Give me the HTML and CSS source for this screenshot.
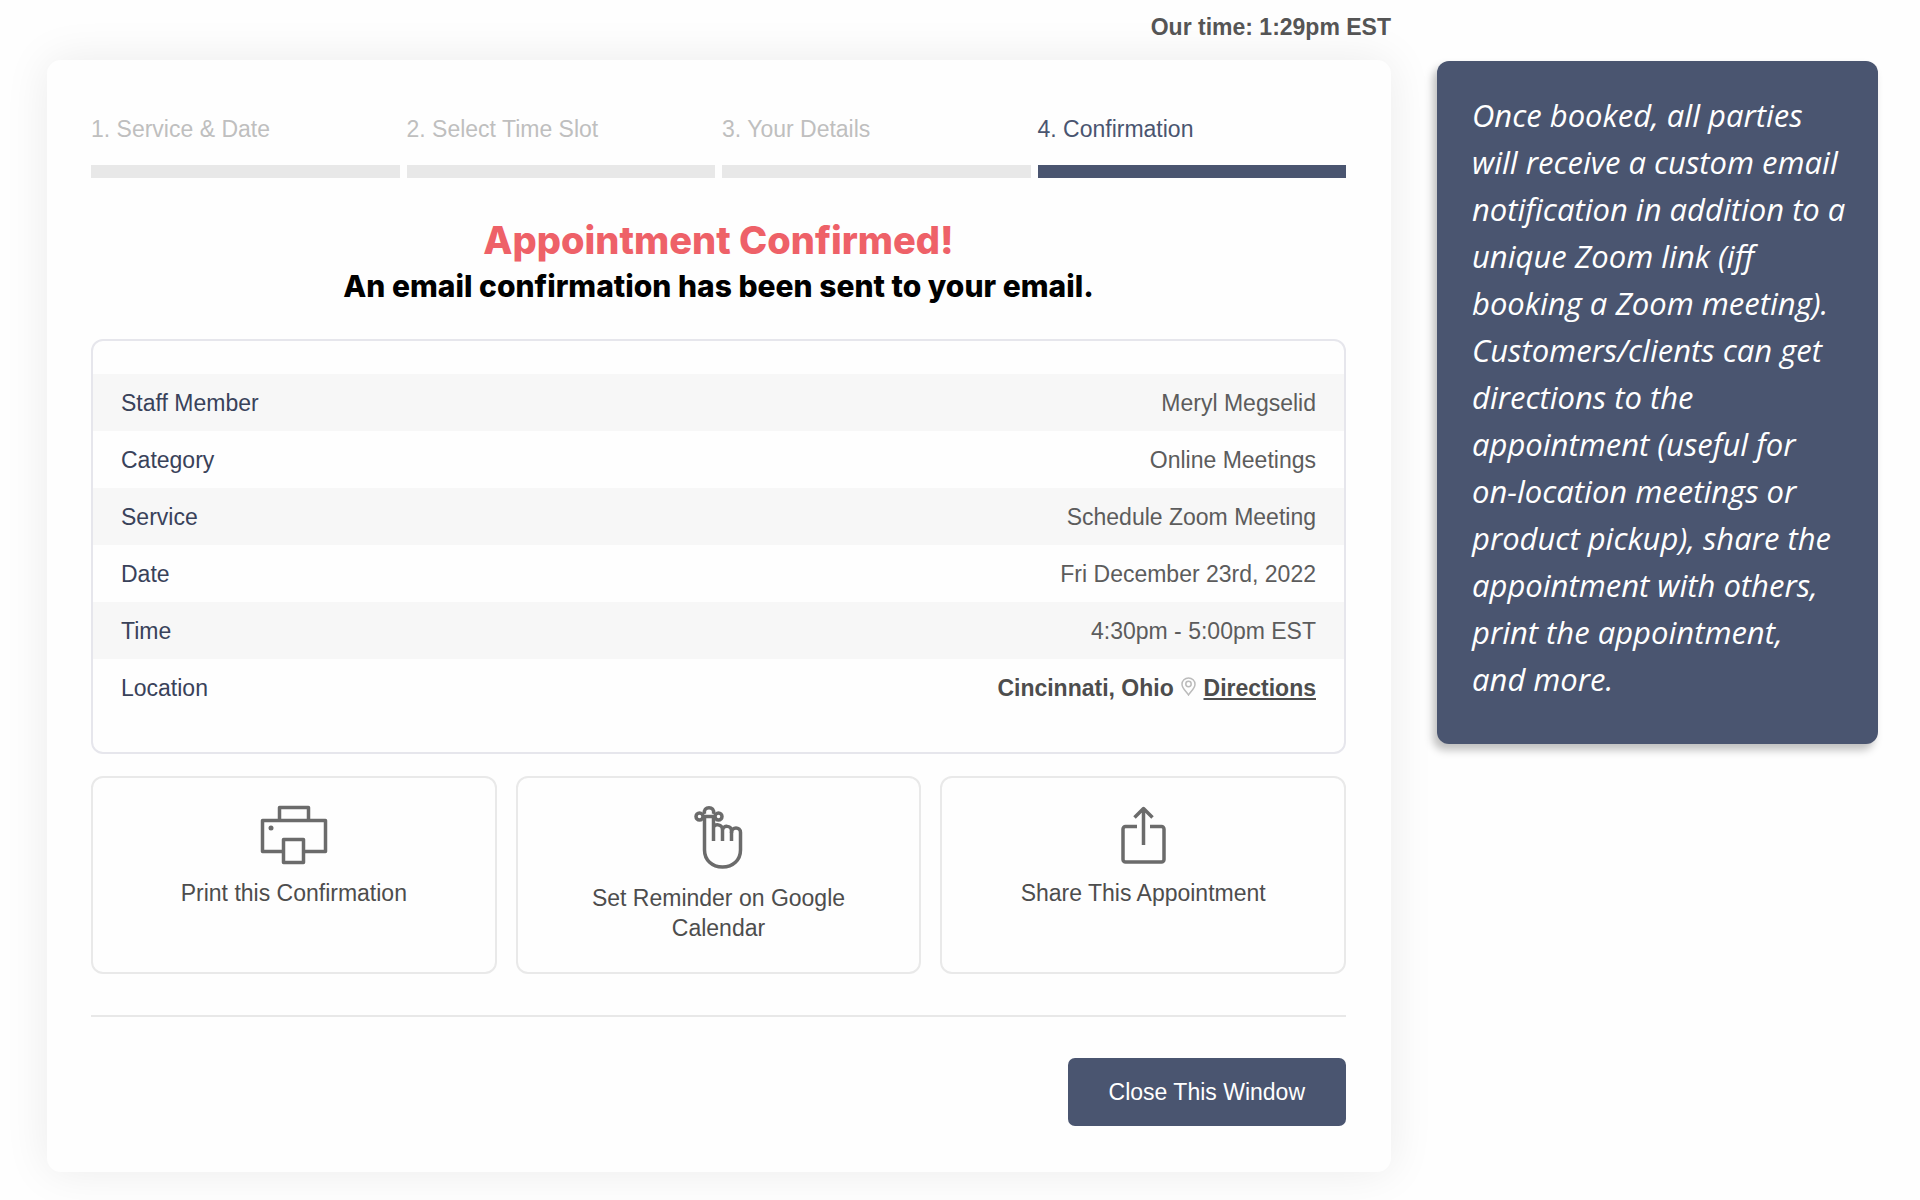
FILE: index.html
```html
<!DOCTYPE html>
<html lang="en">
<head>
<meta charset="utf-8">
<title>Appointment Confirmed</title>
<link rel="stylesheet" href="styles.css">
</head>
<body>
<div class="page">
<main class="booking">
<p class="our-time">Our time: 1:29pm EST</p>
<section class="card">
<ol class="steps">
<li class="step">1. Service &amp; Date</li>
<li class="step">2. Select Time Slot</li>
<li class="step">3. Your Details</li>
<li class="step active">4. Confirmation</li>
</ol>

<h1 class="title">Appointment Confirmed!</h1>
<h2 class="subtitle">An email confirmation has been sent to your email.</h2>

<div class="details">
<table class="details-table">
<tr><th scope="row">Staff Member</th><td>Meryl Megselid</td></tr>
<tr><th scope="row">Category</th><td>Online Meetings</td></tr>
<tr><th scope="row">Service</th><td>Schedule Zoom Meeting</td></tr>
<tr><th scope="row">Date</th><td>Fri December 23rd, 2022</td></tr>
<tr><th scope="row">Time</th><td>4:30pm - 5:00pm EST</td></tr>
<tr><th scope="row">Location</th><td class="location">Cincinnati, Ohio
<svg class="pin" viewBox="0 0 15 19" aria-hidden="true"><path d="M7.500 18C5.500 14.500 1 11.500 1 7.200A6.500 6.300 0 0 1 14 7.200C14 11.500 9.500 14.500 7.500 18Z"/><circle cx="7.500" cy="7" r="2.700"/></svg>
<a href="#">Directions</a></td></tr>
</table>
</div>

<div class="actions">
<button type="button" class="action">
<svg class="icon" width="66" height="58" viewBox="0 0 66 58" aria-hidden="true">
<path d="M18.500 14V1.500H47.500V14M22 45.500H1.500V14.500H64.500V45.500H43M22.500 33.500H42.500V56.500H22.500Z"/>
<circle class="dot" cx="10" cy="22" r="2.500"/>
</svg>
<span>Print this Confirmation</span>
</button>
<button type="button" class="action">
<svg class="icon" width="48" height="63" viewBox="0 0 48 63" aria-hidden="true">
<path d="M10.500 11V44C10.500 54 18 61 28.500 61S46.500 54 46.500 44V26.500C46.500 20.500 37.500 20.500 37.500 26.500V35"/>
<path d="M19.500 11V35M28.500 35V24C28.500 18 20 17 19.500 22M37.500 27V25C37.500 19 29 19 28.500 24"/>
<path d="M10.500 8C8.500 -0.500 21.500 -0.500 19.500 8M9 10.500H21"/>
<circle cx="5.500" cy="10.500" r="3.500"/>
<circle cx="24.500" cy="10.500" r="3.500"/>
</svg>
<span>Set Reminder on Google Calendar</span>
</button>
<button type="button" class="action">
<svg class="icon" width="45" height="58" viewBox="0 0 45 58" aria-hidden="true">
<path d="M16 20.500H4.500A2.500 2.500 0 0 0 2 23V53.500A2.500 2.500 0 0 0 4.500 56H40.500A2.500 2.500 0 0 0 43 53.500V23A2.500 2.500 0 0 0 40.500 20.500H29M22.500 39V3M13.500 11.500L22.500 2.500L31.500 11.500"/>
</svg>
<span>Share This Appointment</span>
</button>
</div>

<div class="footer">
<button type="button" class="close">Close This Window</button>
</div>
</section>
</main>

<aside class="note">
<p>Once booked, all parties will receive a custom email notification in addition to a unique Zoom link (iff booking a Zoom meeting). Customers/clients can get directions to the appointment (useful for on-&#8288;location meetings or product pickup), share the appointment with others, print the appointment, and&nbsp;more.</p>
</aside>
</div>
</body>
</html>
```
FILE: styles.css
```css
*{box-sizing:border-box;}
body{
margin:0;
background:#fefefe;
color:#4d4d4d;
font-family:"Liberation Sans", Arial, sans-serif;
font-size:23px;
line-height:30px;
}
h1,h2,p,ol{margin:0;padding:0;}
button{font:inherit;color:inherit;cursor:pointer;}

.page{
display:grid;
grid-template-columns:64fr 21fr;
gap:46px;
align-items:start;
padding:12px 42px 28px 47px;
}

.our-time{
position:relative;
z-index:1;
margin-bottom:18px;
text-align:right;
font-weight:bold;
color:#555;
}
.card{
padding:54px 45px 46px 44px;
background:#fefefe;
border-radius:14px;
box-shadow:0 0 46px rgba(0,0,0,0.08);
}

/* progress steps */
.steps{
display:grid;
grid-template-columns:repeat(4, 1fr);
gap:7px;
list-style:none;
}
.step{
padding-bottom:21px;
border-bottom:13px solid #e8e8e8;
color:#bfbfbf;
}
.step.active{border-color:#4a5570;color:#4a5570;}

.title,.subtitle{
font-family:Inter, sans-serif;
font-weight:800;
text-align:center;
}
.title{
margin-top:38px;
font-size:38px;
line-height:48px;
color:#ee6168;
}
.subtitle{
margin-bottom:31px;
font-size:30px;
line-height:44px;
color:#000;
}

/* appointment details */
.details{
padding:33px 0 36px;
border:2px solid #e6e6ec;
border-radius:12px;
}
.details-table{width:100%;border-collapse:collapse;}
.details-table tr:nth-child(odd){background:#f7f7f7;}
.details-table th,.details-table td{height:57px;padding:0 28px;}
.details-table th{text-align:left;font-weight:normal;color:#39425a;}
.details-table td{text-align:right;color:#5c5c5c;}
.details-table .location{font-weight:bold;color:#4d4d4d;}
.location a{color:inherit;}
.pin{
width:15px;
height:19px;
margin:0 1px;
fill:none;
stroke:#bbb;
stroke-width:1.5;
}

.actions{
display:grid;
grid-template-columns:repeat(3, 1fr);
gap:19px;
margin-top:22px;
}
.action{
display:flex;
flex-direction:column;
align-items:center;
gap:14px;
padding:28px 50px;
min-height:198px;
background:none;
border:2px solid #e9e9e9;
border-radius:12px;
}
.icon{
fill:none;
stroke:#6b6b6b;
stroke-width:3.5;
stroke-linejoin:round;
overflow:visible;
}
.icon .dot{fill:#6b6b6b;stroke:none;}

.footer{
display:flex;
justify-content:flex-end;
margin-top:41px;
padding-top:41px;
border-top:2px solid #e8e8e8;
}
.close{
padding:19px 41px;
background:#4a5570;
color:#fff;
border:0;
border-radius:7px;
}

.note{
margin-top:49px;
padding:31px 26px 41px 35px;
background:#4a5570;
border-radius:12px;
box-shadow:-4px 6px 9px rgba(0,0,0,0.25);
color:#fff;
font-family:"Open Sans", sans-serif;
font-size:31px;
font-style:italic;
line-height:47px;
}
```
